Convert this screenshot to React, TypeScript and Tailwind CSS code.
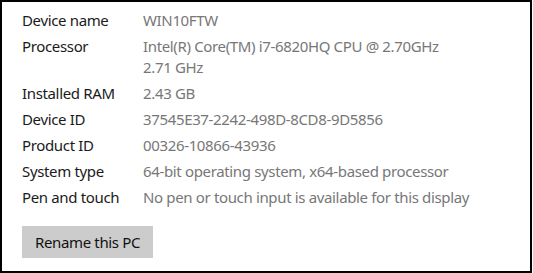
const rows: { label: string; value: string[] }[] = [
  { label: 'Device name', value: ['WIN10FTW'] },
  { label: 'Processor', value: ['Intel(R) Core(TM) i7-6820HQ CPU @ 2.70GHz', '2.71 GHz'] },
  { label: 'Installed RAM', value: ['2.43 GB'] },
  { label: 'Device ID', value: ['37545E37-2242-498D-8CD8-9D5856'] },
  { label: 'Product ID', value: ['00326-10866-43936'] },
  { label: 'System type', value: ['64-bit operating system, x64-based processor'] },
  { label: 'Pen and touch', value: ['No pen or touch input is available for this display'] },
];

export default function App() {
  return (
    <div className="w-[533px] h-[273px] bg-white">
      <div
        className="w-[532px] h-[273px] border-2 border-black pl-[20px] pt-[8px] tracking-[-0.35px]"
        style={{ fontFamily: '"Noto Sans", "Open Sans", sans-serif' }}
      >
        <div className="flex flex-col gap-[5px] text-[15px] leading-[21px]">
          {rows.map((r) => (
            <div key={r.label} className="flex">
              <div className="w-[121px] shrink-0 text-[#1a1a1a]">{r.label}</div>
              <div className="text-[#777777]">
                {r.value.map((v) => (
                  <div key={v}>{v}</div>
                ))}
              </div>
            </div>
          ))}
        </div>
        <button className="mt-[18px] h-[32px] w-[131px] bg-[#cccccc] text-[15px] text-[#111111]">
          Rename this PC
        </button>
      </div>
    </div>
  );
}
